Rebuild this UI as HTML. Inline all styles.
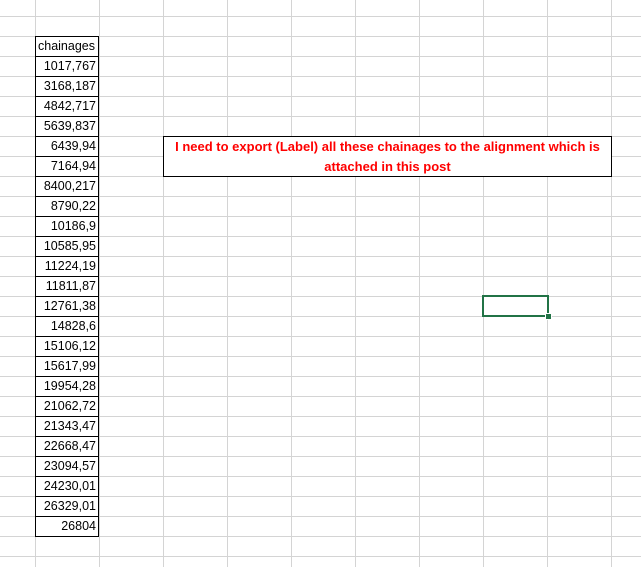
<!DOCTYPE html>
<html><head><style>
html,body{margin:0;padding:0;width:641px;height:567px;overflow:hidden;background:#fff;position:relative;font-family:"Liberation Sans",sans-serif}
.v{position:absolute;top:0;width:1px;height:567px;background:#d4d4d4}
.h{position:absolute;left:0;height:1px;width:641px;background:#d4d4d4}
.c{position:absolute;left:35px;width:64px;height:20px;box-sizing:border-box;border:1px solid #000;background:#fff;font-size:12.5px;line-height:18px;text-align:right;padding-right:2px;color:#000}
.box{position:absolute;left:163px;top:136px;width:449px;height:41px;box-sizing:border-box;border:1px solid #000;background:#fff;color:#f00;font-weight:bold;font-size:13px;letter-spacing:0;text-align:center;line-height:20px;padding-top:0px;white-space:nowrap}
.sel{position:absolute;left:482px;top:295px;width:67px;height:22px;box-sizing:border-box;border:2px solid #217346}
.hd{position:absolute;left:545px;top:313px;width:5px;height:5px;background:#217346;border:1px solid #fff}
</style></head><body>
<div class="v" style="left:35px"></div><div class="v" style="left:99px"></div><div class="v" style="left:163px"></div><div class="v" style="left:227px"></div><div class="v" style="left:291px"></div><div class="v" style="left:355px"></div><div class="v" style="left:419px"></div><div class="v" style="left:483px"></div><div class="v" style="left:547px"></div><div class="v" style="left:611px"></div>
<div class="h" style="top:16px"></div><div class="h" style="top:36px"></div><div class="h" style="top:56px"></div><div class="h" style="top:76px"></div><div class="h" style="top:96px"></div><div class="h" style="top:116px"></div><div class="h" style="top:136px"></div><div class="h" style="top:156px"></div><div class="h" style="top:176px"></div><div class="h" style="top:196px"></div><div class="h" style="top:216px"></div><div class="h" style="top:236px"></div><div class="h" style="top:256px"></div><div class="h" style="top:276px"></div><div class="h" style="top:296px"></div><div class="h" style="top:316px"></div><div class="h" style="top:336px"></div><div class="h" style="top:356px"></div><div class="h" style="top:376px"></div><div class="h" style="top:396px"></div><div class="h" style="top:416px"></div><div class="h" style="top:436px"></div><div class="h" style="top:456px"></div><div class="h" style="top:476px"></div><div class="h" style="top:496px"></div><div class="h" style="top:516px"></div><div class="h" style="top:536px"></div><div class="h" style="top:556px"></div>
<div class="c" style="top:36px;height:21px;text-align:left;padding-left:2px;padding-right:0">chainages</div>
<div class="c" style="top:56px;height:21px">1017,767</div>
<div class="c" style="top:76px;height:21px">3168,187</div>
<div class="c" style="top:96px;height:21px">4842,717</div>
<div class="c" style="top:116px;height:21px">5639,837</div>
<div class="c" style="top:136px;height:21px">6439,94</div>
<div class="c" style="top:156px;height:21px">7164,94</div>
<div class="c" style="top:176px;height:21px">8400,217</div>
<div class="c" style="top:196px;height:21px">8790,22</div>
<div class="c" style="top:216px;height:21px">10186,9</div>
<div class="c" style="top:236px;height:21px">10585,95</div>
<div class="c" style="top:256px;height:21px">11224,19</div>
<div class="c" style="top:276px;height:21px">11811,87</div>
<div class="c" style="top:296px;height:21px">12761,38</div>
<div class="c" style="top:316px;height:21px">14828,6</div>
<div class="c" style="top:336px;height:21px">15106,12</div>
<div class="c" style="top:356px;height:21px">15617,99</div>
<div class="c" style="top:376px;height:21px">19954,28</div>
<div class="c" style="top:396px;height:21px">21062,72</div>
<div class="c" style="top:416px;height:21px">21343,47</div>
<div class="c" style="top:436px;height:21px">22668,47</div>
<div class="c" style="top:456px;height:21px">23094,57</div>
<div class="c" style="top:476px;height:21px">24230,01</div>
<div class="c" style="top:496px;height:21px">26329,01</div>
<div class="c" style="top:516px;height:21px">26804</div>
<div class="box">I need to export (Label) all these chainages to the alignment which is<br>attached in this post</div>
<div class="sel"></div><div class="hd"></div>
</body></html>
